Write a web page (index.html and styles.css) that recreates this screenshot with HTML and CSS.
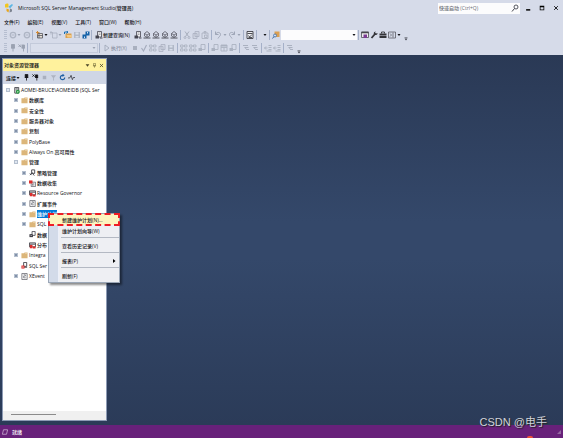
FILE: index.html
```html
<!DOCTYPE html>
<html lang="zh-CN">
<head>
    <meta charset="UTF-8">
    <title>Microsoft SQL Server Management Studio</title>
    <link rel="stylesheet" href="styles.css">
</head>
<body>
    <svg class="sprite" aria-hidden="true">
        <symbol id="circle" viewBox="0 0 16 16"><circle cx="8" cy="8" r="5.5" fill="none" stroke="#aeb5c4" stroke-width="2.5"/><path d="M5 8h6" stroke="#aeb5c4" stroke-width="2"/></symbol>
        <symbol id="newproject" viewBox="0 0 16 16"><path d="M3 5h10v9H3zM6 5v9M3 9h10" fill="#e6e0d8" stroke="#55555c" stroke-width="1.6"/><path d="M3 0v7M0 3h7" stroke="#d18a38" stroke-width="2"/></symbol>
        <symbol id="newitem" viewBox="0 0 16 16"><path d="M5 4h9v10H5zM2 0v7M0 3h6" fill="none" stroke="#a9b0bf" stroke-width="1.6"/></symbol>
        <symbol id="open" viewBox="0 0 16 16"><path d="M3 5h12v9H3z" fill="#dba04d"/><path d="M5 8h10v5H7z" fill="#f5c982"/><path d="M1 6V2h6M5 0l3 2-3 3" fill="none" stroke="#176fb5" stroke-width="2"/></symbol>
        <symbol id="save" viewBox="0 0 16 16"><path d="M2 2h12v12H2z" fill="#b1b8c7"/><path d="M5 3h6v4H5zM5 10h6v3H5z" fill="#d9dfeb"/></symbol>
        <symbol id="saveall" viewBox="0 0 16 16"><path d="M7 1h8v8H7zM1 7h8v8H1z" fill="#1261a8"/><path d="M10 2h2v3h-2zM4 11h2v3H4z" fill="#d6e1f0"/></symbol>
        <symbol id="query" viewBox="0 0 16 16"><path d="M5 1h8v11H5z" fill="#f2f2f4" stroke="#454550" stroke-width="1.6"/><path d="M7 4h4M7 7h4" stroke="#55555c"/><path d="M1 9h7v6H1z" fill="#454550"/><path d="M10 14h5" stroke="#454550" stroke-width="2"/></symbol>
        <symbol id="cube" viewBox="0 0 16 16"><path d="M3 5l5-4 5 4v5l-5 3-5-3zM3 5l5 3 5-3M8 8v5" fill="none" stroke="#51525c" stroke-width="1.5"/><path d="M1 14h14" stroke="#51525c" stroke-width="2"/></symbol>
        <symbol id="cut" viewBox="0 0 16 16"><path d="M4 1l7 10M12 1L5 11" stroke="#a3a9b8" stroke-width="1.8"/><circle cx="4" cy="13" r="2" fill="none" stroke="#a3a9b8" stroke-width="1.5"/><circle cx="12" cy="13" r="2" fill="none" stroke="#a3a9b8" stroke-width="1.5"/></symbol>
        <symbol id="copy" viewBox="0 0 16 16"><path d="M6 1h8v10H6zM2 5h8v10H2z" fill="#d0d5e2" stroke="#a8aebd" stroke-width="1.5"/></symbol>
        <symbol id="paste" viewBox="0 0 16 16"><path d="M2 4h12v11H2zM6 1h4v3H6zM7 8h5v5H7z" fill="none" stroke="#a8aebd" stroke-width="1.6"/></symbol>
        <symbol id="undo" viewBox="0 0 16 16"><path d="M3 1v6h6M3 7c3-6 10-5 10 0 0 3-3 4-5 8" fill="none" stroke="#9fa6b7" stroke-width="2"/></symbol>
        <symbol id="redo" viewBox="0 0 16 16"><path d="M13 1v6H7M13 7C10 1 3 2 3 7c0 3 3 4 5 8" fill="none" stroke="#9fa6b7" stroke-width="2"/></symbol>
        <symbol id="activity" viewBox="0 0 16 16"><path d="M2 1h12v14H2z" fill="#eceef2" stroke="#3d3d44" stroke-width="1.8"/><path d="M3 5h10M5 9l2 3 5-5M5 13h7" fill="none" stroke="#3d3d44" stroke-width="1.8"/></symbol>
        <symbol id="find" viewBox="0 0 16 16"><path d="M5 1h10v11H5z" fill="#dca052"/><circle cx="6" cy="9" r="3" fill="#cfe0f4" stroke="#3768a6" stroke-width="1.5"/><path d="M4 11l-3 4" stroke="#3768a6" stroke-width="2"/></symbol>
        <symbol id="window" viewBox="0 0 16 16"><path d="M1 2h14v11H1z" fill="#eee" stroke="#46464c" stroke-width="1.5"/><path d="M1 3h14" stroke="#46464c" stroke-width="3"/><path d="M5 7h7v7H5z" fill="#7b3a93"/></symbol>
        <symbol id="wrench" viewBox="0 0 16 16"><path d="M3 14l7-8" stroke="#333338" stroke-width="3.5"/><path d="M12 1c-6 0-6 8 0 7 2 0 3-2 3-4l-3 1-2-2z" fill="#333338"/></symbol>
        <symbol id="toolbox" viewBox="0 0 16 16"><path d="M5 5V2h6v3" fill="none" stroke="#333338" stroke-width="1.8"/><path d="M1 5h14v4H1zM1 10h14v4H1z" fill="#333338"/></symbol>
        <symbol id="panel" viewBox="0 0 16 16"><path d="M1 2h14v12H1zM4 5l3 3-3 3M10 3v10" fill="none" stroke="#55565e" stroke-width="1.5"/></symbol>
        <symbol id="plug" viewBox="0 0 16 16"><path d="M5 1h6v7H5zM4 8h8M8 8v7" fill="currentColor" stroke="currentColor" stroke-width="1.8"/></symbol>
        <symbol id="unplug" viewBox="0 0 16 16"><path d="M8 2h5v6H8zM7 8h7M11 8v7" fill="currentColor" stroke="currentColor" stroke-width="1.8"/><path class="cross" d="M1 1l5 5M6 1L1 6" stroke-width="2"/></symbol>
        <symbol id="play" viewBox="0 0 16 16"><path d="M4 2l8 6-8 6z" fill="none" stroke="#a3aabb" stroke-width="1.8"/></symbol>
        <symbol id="stop" viewBox="0 0 16 16"><path d="M4 4h8v8H4z" fill="#a9b0bf"/></symbol>
        <symbol id="check" viewBox="0 0 16 16"><path d="M3 8l4 6 6-12" fill="none" stroke="#a3aabb" stroke-width="2.2"/></symbol>
        <symbol id="plan" viewBox="0 0 16 16"><path d="M1 2h5v4H1zM9 2h5v4H9zM1 10h5v4H1zM9 10h5v4H9zM4 6v4M6 4h3" fill="none" stroke="#abb2c1" stroke-width="1.7"/></symbol>
        <symbol id="grid" viewBox="0 0 16 16"><path d="M2 2h12v12H2zM2 7h12M8 7v7" fill="none" stroke="#abb2c1" stroke-width="1.8"/><path d="M2 2h12v3H2z" fill="#abb2c1"/></symbol>
        <symbol id="result" viewBox="0 0 16 16"><path d="M6 1h8v10H6z" fill="none" stroke="#abb2c1" stroke-width="1.8"/><path d="M1 8h7v6H1z" fill="#abb2c1"/></symbol>
        <symbol id="comment" viewBox="0 0 16 16"><path d="M2 3h10M6 7h7M10 11h4M5 6l5 6" stroke="#a5acbb" stroke-width="1.8"/></symbol>
        <symbol id="indent" viewBox="0 0 16 16"><path d="M1 8h6M4 5L1 8l3 3M9 3h6M9 7h6M9 11h6M5 14h10" fill="none" stroke="#a5acbb" stroke-width="1.7"/></symbol>
        <symbol id="filter" viewBox="0 0 16 16"><path d="M2 3h12l-5 6v6H7V9z" fill="#aeb4c1"/></symbol>
        <symbol id="refresh" viewBox="0 0 16 16"><path d="M13 8a5 5 0 1 1-5-5h3" fill="none" stroke="#1e5fa3" stroke-width="2.6"/><path d="M8 0l5 3-5 4z" fill="#1e5fa3"/></symbol>
        <symbol id="pulse" viewBox="0 0 16 16"><path d="M0 9h4l3-6 3 10 2-5h4" fill="none" stroke="#42434c" stroke-width="2"/></symbol>
        <symbol id="search" viewBox="0 0 16 16"><circle cx="10" cy="6" r="4" fill="none" stroke="#44464f" stroke-width="1.8"/><path d="M7 9l-5 6" stroke="#44464f" stroke-width="2"/></symbol>
        <symbol id="pin" viewBox="0 0 16 16"><path d="M5 1h6v8H5zM3 9h10M8 9v6" fill="none" stroke="#6b6334" stroke-width="1.8"/></symbol>
        <symbol id="close" viewBox="0 0 16 16"><path d="M3 3l10 10M13 3L3 13" stroke="currentColor" stroke-width="2.4"/></symbol>
        <symbol id="caret" viewBox="0 0 8 8"><path d="M1 2h6L4 6z" fill="currentColor"/></symbol>
        <symbol id="overflow" viewBox="0 0 8 8"><path d="M1 0h6v1H1zM1 3h6L4 7z" fill="#3f414a"/></symbol>
        <symbol id="folder" viewBox="0 0 16 16"><path d="M1 3h6l1-2h7v13H1z" fill="#dcb67a"/><path d="M9 3h5" stroke="#f3dfbd" stroke-width="1.5"/></symbol>
        <symbol id="server" viewBox="0 0 16 16"><path d="M4 1h9v13H4z" fill="#f5f5f5" stroke="#3f3f46" stroke-width="2"/><path d="M6 4h5M6 7h5" stroke="#3f3f46" stroke-width="1.5"/><circle cx="11" cy="11" r="4.5" fill="#269a42"/><path d="M10 9l3 2-3 2z" fill="#fff"/></symbol>
        <symbol id="policy" viewBox="0 0 16 16"><path d="M6 2h7v8H6z" fill="#fff" stroke="#3f3f46" stroke-width="2"/><path d="M8 8l-6 6M8 10l4 5M2 10l4 4" stroke="#3f3f46" stroke-width="2"/></symbol>
        <symbol id="collect" viewBox="0 0 16 16"><path d="M5 5h10v10H5z" fill="#fff" stroke="#55555c" stroke-width="1.6"/><path d="M8 8v5M11 7v6" stroke="#55555c" stroke-width="1.5"/><path d="M0 1h8v7H0z" fill="#dd2f2d"/></symbol>
        <symbol id="governor" viewBox="0 0 16 16"><path d="M1 2h14v9H1z" fill="#fff" stroke="#3f3f46" stroke-width="2"/><path d="M2 5h12" stroke="#3f3f46" stroke-width="2"/><path d="M2 7h6v7H2zM9 10h6v5H9z" fill="#dd2f2d"/></symbol>
        <symbol id="event" viewBox="0 0 16 16"><path d="M2 1h12v14H2z" fill="#fff" stroke="#62636b" stroke-width="1.8"/><path d="M6 4h4v3H6v4h5" fill="none" stroke="#62636b" stroke-width="1.6"/></symbol>
        <symbol id="mail" viewBox="0 0 16 16"><path d="M7 1h7v9H7z" fill="#fff" stroke="#3f3f46" stroke-width="1.8"/><path d="M1 7h8v7H1z" fill="#3f3f46"/><path d="M2 8l3 3 3-3" fill="none" stroke="#fff"/></symbol>
        <symbol id="agent" viewBox="0 0 16 16"><path d="M6 1h7v9H6zM3 12h11" fill="#fff" stroke="#3f3f46" stroke-width="2"/><path d="M1 8h7v7H1z" fill="#dd2f2d"/><path d="M3 10l3 3M6 10l-3 3" stroke="#fff"/></symbol>
    </svg>

    <header class="top">
        <div class="titlebar">
            <svg class="logo" viewBox="0 0 20 20" aria-hidden="true">
                <path d="M2 3c3-3 7-2 7 0v6H2z" fill="#f2c61f"/>
                <path d="M9 7l7-5 2 2-6 7z" fill="#5cb6e4"/>
                <path d="M5 11l5 2-1 6-4-3z" fill="#e8a51a"/>
                <path d="M12 11l4 2v4l-5 2z" fill="#7d8491"/>
            </svg>
            <h1 class="app-title">Microsoft SQL Server Management Studio(管理员)</h1>
            <label class="quick">
                <input type="text" placeholder="快速启动 (Ctrl+Q)" aria-label="快速启动">
                <svg class="ico"><use href="#search"/></svg>
            </label>
            <div class="window-buttons">
                <button aria-label="最小化"><svg viewBox="0 0 16 16"><path d="M3 11h11v4H3z"/></svg></button>
                <button aria-label="最大化"><svg viewBox="0 0 16 16"><path d="M2 2h12v12H2zM4 6v6h8V6z" fill-rule="evenodd"/></svg></button>
                <button aria-label="关闭"><svg><use href="#close"/></svg></button>
            </div>
        </div>
        <nav class="menubar">
            <button>文件(F)</button>
            <button>编辑(E)</button>
            <button>视图(V)</button>
            <button>工具(T)</button>
            <button>窗口(W)</button>
            <button>帮助(H)</button>
        </nav>
        <div class="toolbar">
            <i class="grip"></i>
            <button class="tool" aria-label="后退"><svg><use href="#circle"/></svg></button>
            <button class="drop dim" aria-label="后退列表"><svg><use href="#caret"/></svg></button>
            <button class="tool" aria-label="前进"><svg><use href="#circle"/></svg></button>
            <i class="sep"></i>
            <button class="tool" aria-label="新建项目"><svg><use href="#newproject"/></svg></button>
            <button class="drop" aria-label="新建列表"><svg><use href="#caret"/></svg></button>
            <button class="tool" aria-label="添加项"><svg><use href="#newitem"/></svg></button>
            <button class="drop dim" aria-label="添加列表"><svg><use href="#caret"/></svg></button>
            <button class="tool" aria-label="打开"><svg><use href="#open"/></svg></button>
            <button class="tool" aria-label="保存"><svg><use href="#save"/></svg></button>
            <button class="tool" aria-label="全部保存"><svg><use href="#saveall"/></svg></button>
            <i class="sep"></i>
            <button class="tool text"><svg><use href="#query"/></svg>新建查询(N)</button>
            <button class="tool" aria-label="数据库引擎查询"><svg><use href="#query"/></svg></button>
            <button class="tool" aria-label="MDX 查询"><svg><use href="#cube"/></svg></button>
            <button class="tool" aria-label="DMX 查询"><svg><use href="#cube"/></svg></button>
            <button class="tool" aria-label="XMLA 查询"><svg><use href="#cube"/></svg></button>
            <button class="tool" aria-label="DAX 查询"><svg><use href="#cube"/></svg></button>
            <i class="sep"></i>
            <button class="tool" aria-label="剪切"><svg><use href="#cut"/></svg></button>
            <button class="tool" aria-label="复制"><svg><use href="#copy"/></svg></button>
            <button class="tool" aria-label="粘贴"><svg><use href="#paste"/></svg></button>
            <i class="sep"></i>
            <button class="tool" aria-label="撤消"><svg><use href="#undo"/></svg></button>
            <button class="drop dim" aria-label="撤消列表"><svg><use href="#caret"/></svg></button>
            <button class="tool" aria-label="重做"><svg><use href="#redo"/></svg></button>
            <button class="drop dim" aria-label="重做列表"><svg><use href="#caret"/></svg></button>
            <i class="sep"></i>
            <button class="tool" aria-label="活动监视器"><svg><use href="#activity"/></svg></button>
            <i class="sep"></i>
            <button class="drop wide" aria-label="选项"><svg><use href="#caret"/></svg></button>
            <i class="sep"></i>
            <button class="tool" aria-label="查找"><svg><use href="#find"/></svg></button>
            <span class="combo find-box"><select aria-label="查找内容"><option></option></select><svg><use href="#caret"/></svg></span>
            <i class="sep"></i>
            <button class="tool" aria-label="属性窗口"><svg><use href="#window"/></svg></button>
            <button class="tool" aria-label="设置"><svg><use href="#wrench"/></svg></button>
            <button class="tool" aria-label="工具箱"><svg><use href="#toolbox"/></svg></button>
            <button class="tool" aria-label="命令窗口"><svg><use href="#panel"/></svg></button>
            <button class="drop" aria-label="窗口列表"><svg><use href="#caret"/></svg></button>
            <button class="more" aria-label="工具栏选项"><svg><use href="#overflow"/></svg></button>
        </div>
        <div class="toolbar">
            <i class="grip"></i>
            <button class="tool dim" aria-label="连接"><svg><use href="#plug"/></svg></button>
            <button class="tool dim" aria-label="更改连接"><svg><use href="#unplug"/></svg></button>
            <i class="sep"></i>
            <span class="combo db-box dim"><select aria-label="可用数据库" disabled><option></option></select><svg><use href="#caret"/></svg></span>
            <i class="sep"></i>
            <button class="tool text run"><svg><use href="#play"/></svg>执行(X)</button>
            <button class="tool" aria-label="停止"><svg><use href="#stop"/></svg></button>
            <button class="tool" aria-label="分析"><svg><use href="#check"/></svg></button>
            <button class="tool" aria-label="估计的执行计划"><svg><use href="#plan"/></svg></button>
            <button class="tool" aria-label="查询选项"><svg><use href="#copy"/></svg></button>
            <button class="tool" aria-label="智能感知"><svg><use href="#save"/></svg></button>
            <i class="sep"></i>
            <button class="tool" aria-label="实际的执行计划"><svg><use href="#plan"/></svg></button>
            <button class="tool" aria-label="实时统计"><svg><use href="#plan"/></svg></button>
            <button class="tool" aria-label="客户端统计"><svg><use href="#result"/></svg></button>
            <i class="sep"></i>
            <button class="tool" aria-label="结果到文本"><svg><use href="#result"/></svg></button>
            <button class="tool" aria-label="结果到网格"><svg><use href="#grid"/></svg></button>
            <button class="tool" aria-label="结果到文件"><svg><use href="#result"/></svg></button>
            <i class="sep"></i>
            <button class="tool" aria-label="注释"><svg><use href="#comment"/></svg></button>
            <button class="tool" aria-label="取消注释"><svg><use href="#comment"/></svg></button>
            <i class="sep"></i>
            <button class="tool" aria-label="减少缩进"><svg><use href="#indent"/></svg></button>
            <button class="tool" aria-label="增加缩进"><svg><use href="#indent"/></svg></button>
            <i class="sep"></i>
            <button class="tool" aria-label="模板参数"><svg><use href="#comment"/></svg></button>
            <button class="more" aria-label="工具栏选项"><svg><use href="#overflow"/></svg></button>
        </div>
    </header>

    <main class="workspace">
        <section class="explorer">
            <div class="explorer-head">
                <h2>对象资源管理器</h2>
                <button aria-label="窗口位置"><svg><use href="#caret"/></svg></button>
                <button aria-label="自动隐藏"><svg><use href="#pin"/></svg></button>
                <button aria-label="关闭"><svg><use href="#close"/></svg></button>
            </div>
            <div class="explorer-tools">
                <button class="connect">连接<svg><use href="#caret"/></svg></button>
                <button class="tool" aria-label="连接"><svg><use href="#plug"/></svg></button>
                <button class="tool" aria-label="断开连接"><svg><use href="#unplug"/></svg></button>
                <button class="tool" aria-label="停止"><svg><use href="#stop"/></svg></button>
                <button class="tool" aria-label="筛选"><svg><use href="#filter"/></svg></button>
                <button class="tool" aria-label="刷新"><svg><use href="#refresh"/></svg></button>
                <button class="tool" aria-label="活动"><svg><use href="#pulse"/></svg></button>
            </div>
            <ul class="tree">
                <li><i class="box open"></i><svg><use href="#server"/></svg><span>AOMEI-BRUCE\AOMEIDB (SQL Ser</span></li>
                <li class="l1"><i class="box"></i><svg><use href="#folder"/></svg><span>数据库</span></li>
                <li class="l1"><i class="box"></i><svg><use href="#folder"/></svg><span>安全性</span></li>
                <li class="l1"><i class="box"></i><svg><use href="#folder"/></svg><span>服务器对象</span></li>
                <li class="l1"><i class="box"></i><svg><use href="#folder"/></svg><span>复制</span></li>
                <li class="l1"><i class="box"></i><svg><use href="#folder"/></svg><span>PolyBase</span></li>
                <li class="l1"><i class="box"></i><svg><use href="#folder"/></svg><span>Always On 高可用性</span></li>
                <li class="l1"><i class="box open"></i><svg><use href="#folder"/></svg><span>管理</span></li>
                <li class="l2"><i class="box"></i><svg><use href="#policy"/></svg><span>策略管理</span></li>
                <li class="l2"><i class="box"></i><svg><use href="#collect"/></svg><span>数据收集</span></li>
                <li class="l2"><i class="box"></i><svg><use href="#governor"/></svg><span>Resource Governor</span></li>
                <li class="l2"><i class="box"></i><svg><use href="#event"/></svg><span>扩展事件</span></li>
                <li class="l2"><i class="box"></i><svg><use href="#folder"/></svg><span class="selected">维护计划</span></li>
                <li class="l2"><i class="box"></i><svg><use href="#folder"/></svg><span>SQL</span></li>
                <li class="l2"><i class="box none"></i><svg><use href="#mail"/></svg><span>数据</span></li>
                <li class="l2"><i class="box none"></i><svg><use href="#governor"/></svg><span>分布</span></li>
                <li class="l1"><i class="box"></i><svg><use href="#folder"/></svg><span>Integra</span></li>
                <li class="l1"><i class="box none"></i><svg><use href="#agent"/></svg><span>SQL Ser</span></li>
                <li class="l1"><i class="box"></i><svg><use href="#event"/></svg><span>XEvent</span></li>
            </ul>
            <div class="hscroll"><i></i></div>
        </section>

        <div class="context-menu">
            <button class="active">新建维护计划(N)...</button>
            <button>维护计划向导(W)</button>
            <hr>
            <button>查看历史记录(V)</button>
            <hr>
            <button>报表(P)<svg viewBox="0 0 8 8"><path d="M2 0l5 4-5 4z"/></svg></button>
            <hr>
            <button>刷新(F)</button>
        </div>
    </main>

    <footer class="status">
        <svg viewBox="0 0 16 16" aria-hidden="true"><path d="M4 2h11l-3 12H1z" fill="none" stroke="#d9c4df" stroke-width="1.8"/></svg>
        <span>就绪</span>
        <svg class="resize" viewBox="0 0 8 8" aria-hidden="true"><path d="M8 0v8H0z" fill="#9467a1"/></svg>
        <i class="spark"></i>
    </footer>
    <div class="watermark">CSDN @电手</div>
</body>
</html>
```
FILE: styles.css
```css
* {
    box-sizing: border-box;
}
body {
    margin: 0;
    height: 100vh;
    display: flex;
    flex-direction: column;
    overflow: hidden;
    position: relative;
    background: #2b3b58;
    color: #101014;
    font-family: "Open Sans", "Noto Sans CJK SC", sans-serif;
    font-size: 5px;
    font-weight: 500;
    line-height: 8px;
}
button, input, select {
    font: inherit;
    color: inherit;
    background: none;
    border: 0;
    padding: 0;
    margin: 0;
}
button {
    display: flex;
    align-items: center;
    white-space: nowrap;
}
h1, h2 {
    margin: 0;
    font-size: inherit;
    font-weight: inherit;
}
svg {
    display: block;
    flex: none;
    width: 8px;
    height: 8px;
}
.sprite {
    position: absolute;
    width: 0;
    height: 0;
}
.dim {
    color: #9aa1b1;
}
.run {
    color: #868d9e;
}
.cross {
    stroke: currentColor;
}

/* title, menus and toolbars */
.top {
    background: #d6dbe9;
    padding-bottom: 1px;
}
.titlebar {
    display: flex;
    align-items: center;
    height: 16px;
    padding: 0 4px;
}
.logo {
    width: 10px;
    height: 12px;
    margin-right: 4px;
}
.app-title {
    flex: 1;
}
.quick {
    display: flex;
    align-items: center;
    width: 82px;
    height: 11px;
    padding: 0 1px;
    background: #fcfcfd;
}
.quick input {
    flex: 1;
    min-width: 0;
    outline: none;
}
.quick input::placeholder {
    color: #6b6d75;
    opacity: 1;
}
.window-buttons {
    display: flex;
    gap: 8px;
    margin-left: 5px;
}
.window-buttons svg {
    width: 6px;
    height: 6px;
}
.menubar {
    display: flex;
    gap: 8px;
    height: 12px;
    padding-left: 4px;
}
.toolbar {
    display: flex;
    align-items: center;
    height: 13px;
    padding-left: 4px;
}
.grip {
    width: 3px;
    height: 9px;
    margin-right: 1px;
    background: repeating-linear-gradient(#b6bed0 0 1px, transparent 1px 2px);
}
.sep {
    width: 1px;
    height: 10px;
    margin: 0 2px 0 1px;
    background: #a5b0c8;
}
.tool, .toolbar > button {
    flex: none;
}
.tool {
    justify-content: center;
    min-width: 9px;
    height: 10px;
}
.tool.text {
    padding: 0 4px 0 1px;
}
.drop {
    width: 5px;
}
.drop svg, .combo svg, .connect svg {
    width: 4px;
    height: 4px;
}
.drop.wide {
    width: 9px;
    padding-left: 4px;
}
.more {
    align-self: flex-end;
    padding-left: 2px;
}
.more svg {
    width: 4px;
    height: 4px;
}
.combo {
    display: flex;
    align-items: center;
    height: 10px;
    padding-right: 1px;
    background: #fcfcfd;
}
.combo select {
    flex: 1;
    min-width: 0;
    height: 10px;
    appearance: none;
}
.find-box {
    width: 76px;
}
.db-box {
    width: 68px;
    border: 1px solid #c3cada;
    background: #d9deeb;
}

/* document area */
.workspace {
    flex: 1;
    min-height: 0;
    display: flex;
    position: relative;
    padding: 3px 2px 4px;
    background: linear-gradient(#2a3955, #34486a 45%, #34486a 55%, #2b3b58);
}
.explorer {
    display: flex;
    flex-direction: column;
    width: 105px;
    overflow: hidden;
    border: 1px solid #8c9ab4;
    background: #fff;
}
.explorer-head {
    display: flex;
    align-items: center;
    height: 12px;
    padding: 0 2px 0 1px;
    background: #fff29d;
    color: #4a4526;
}
.explorer-head h2 {
    flex: 1;
    color: #101014;
}
.explorer-head button {
    margin-left: 2px;
}
.explorer-head svg {
    width: 5px;
    height: 5px;
}
.explorer-tools {
    display: flex;
    align-items: center;
    height: 13px;
    padding-left: 3px;
    background: #cfd6e5;
}
.connect {
    margin-right: 2px;
}
.explorer-tools .tool svg {
    width: 7px;
    height: 7px;
}
.explorer-tools .cross {
    stroke: #d33c31;
}
.tree {
    flex: 1;
    min-height: 0;
    margin: 0;
    padding: 1px 0 0 3px;
    list-style: none;
    overflow: hidden;
}
.tree li {
    display: flex;
    align-items: center;
    height: 10px;
    white-space: nowrap;
}
.tree li:nth-child(3n) {
    height: 11px;
}
.tree svg {
    width: 7px;
    height: 7px;
    margin: 0 1px 0 3px;
}
.tree .l1 {
    padding-left: 8px;
}
.tree .l2 {
    padding-left: 16px;
}
.box {
    flex: none;
    width: 4px;
    height: 4px;
    border: 1px solid #b4bfce;
    background: #8291a9;
}
.box.open {
    background: #dfe6f0;
}
.box.none {
    visibility: hidden;
}
.selected {
    background: #0078d7;
    color: #fff;
}
.hscroll {
    height: 9px;
    padding: 3px 8px;
    background: #f0f0f0;
}
.hscroll i {
    display: block;
    width: 45px;
    height: 1px;
    background: #8b8b8b;
}

/* floats above the tree at the clicked node */
.context-menu {
    position: absolute;
    left: 48px;
    top: 158px;
    width: 72px;
    padding-bottom: 1px;
    border: 1px solid #9ba7b7;
    background: linear-gradient(90deg, #d3dbe9 9px, #eaf0ff 9px, #eeeff3 10px);
    box-shadow: 2px 2px 2px rgba(0, 0, 0, 0.45);
}
.context-menu button {
    width: 100%;
    height: 11px;
    padding: 0 3px 0 13px;
}
.context-menu .active {
    background: #fdf4bf;
    outline: 2px dashed #ee1c25;
    outline-offset: -1px;
}
.context-menu svg {
    width: 4px;
    height: 4px;
    margin-left: auto;
}
.context-menu hr {
    height: 1px;
    margin: 1px 0 2px 12px;
    border: 0;
    background: #b4b9c3;
}

.status {
    display: flex;
    align-items: center;
    gap: 4px;
    height: 13px;
    padding: 0 2px;
    background: #68217a;
    color: #fff;
}
.status svg {
    width: 6px;
    height: 6px;
}
.status .resize {
    width: 4px;
    height: 4px;
    margin-left: auto;
}
.spark {
    position: absolute;
    right: 30px;
    bottom: 0;
    width: 6px;
    height: 2px;
    border-radius: 3px 3px 0 0;
    background: #f0533a;
}
.watermark {
    position: absolute;
    right: 16px;
    bottom: 8px;
    font-family: "Liberation Sans", "Noto Sans CJK SC", sans-serif;
    font-size: 11px;
    font-weight: 400;
    line-height: 16px;
    color: #d0d3da;
    text-shadow: 1px 1px 1px #222;
}
```
